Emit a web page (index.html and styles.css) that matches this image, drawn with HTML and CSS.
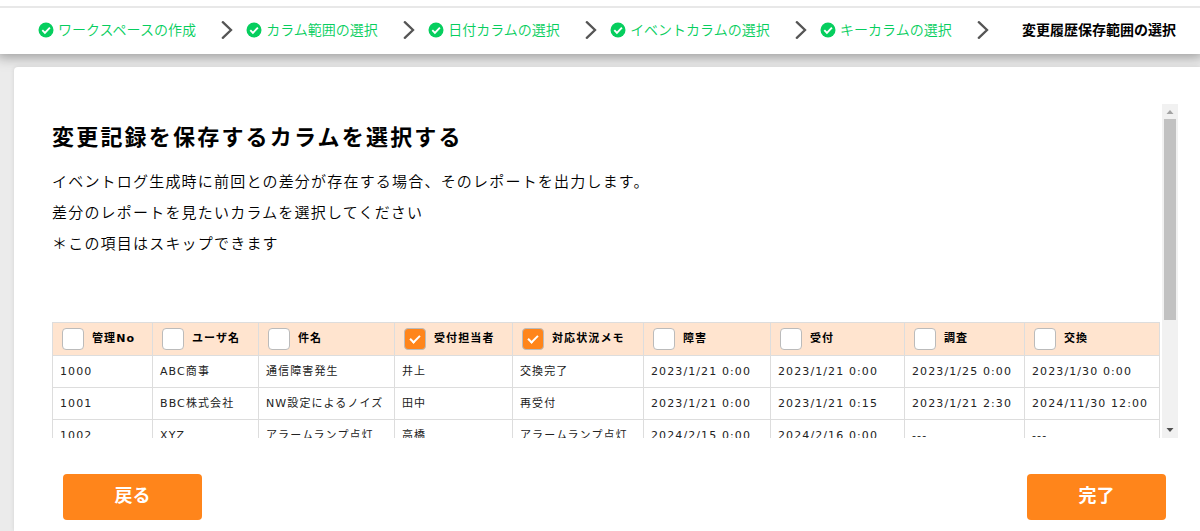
FILE: index.html
```
<!DOCTYPE html>
<html lang="ja">

<head>
    <meta charset="UTF-8">
    <meta name="viewport" content="width=device-width, initial-scale=1.0">
    <title>変更履歴保存範囲の選択</title>
    <link rel="stylesheet" href="styles.css">
</head>

<body>
    <!-- Shared icons -->
    <svg class="icon-defs" aria-hidden="true">
        <symbol id="icon-check" viewBox="0 0 16 16">
            <circle cx="8" cy="8" r="7.5" fill="#06ce5e" />
            <path d="M4.3 8.2l2.6 2.6 5-5.2" fill="none" stroke="#fff" stroke-width="1.9" />
        </symbol>
        <symbol id="icon-chevron" viewBox="0 0 12 18">
            <path d="M1.8 1.2L10 9l-8.2 7.8" fill="none" stroke="#555" stroke-width="2.3" stroke-linecap="round" />
        </symbol>
    </svg>

    <header>
        <ol class="steps">
            <li class="done">
                <svg class="check"><use href="#icon-check" /></svg>
                <span>ワークスペースの作成</span>
                <svg class="chevron"><use href="#icon-chevron" /></svg>
            </li>
            <li class="done">
                <svg class="check"><use href="#icon-check" /></svg>
                <span>カラム範囲の選択</span>
                <svg class="chevron"><use href="#icon-chevron" /></svg>
            </li>
            <li class="done">
                <svg class="check"><use href="#icon-check" /></svg>
                <span>日付カラムの選択</span>
                <svg class="chevron"><use href="#icon-chevron" /></svg>
            </li>
            <li class="done">
                <svg class="check"><use href="#icon-check" /></svg>
                <span>イベントカラムの選択</span>
                <svg class="chevron"><use href="#icon-chevron" /></svg>
            </li>
            <li class="done">
                <svg class="check"><use href="#icon-check" /></svg>
                <span>キーカラムの選択</span>
                <svg class="chevron"><use href="#icon-chevron" /></svg>
            </li>
            <li class="current" aria-current="step">変更履歴保存範囲の選択</li>
        </ol>
    </header>

    <main class="panel">
        <div class="scroll-box">
            <div class="scroll-area">
                <h1>変更記録を保存するカラムを選択する</h1>
                <div class="description">
                    <p>イベントログ生成時に前回との差分が存在する場合、そのレポートを出力します。</p>
                    <p>差分のレポートを見たいカラムを選択してください</p>
                    <p>＊この項目はスキップできます</p>
                </div>

                <table>
                    <colgroup>
                        <col class="col-no">
                        <col class="col-user">
                        <col class="col-subject">
                        <col class="col-staff">
                        <col class="col-memo">
                        <col class="col-failure">
                        <col class="col-received">
                        <col class="col-survey">
                        <col class="col-exchange">
                    </colgroup>
                    <thead>
                        <tr>
                            <th><label><input type="checkbox">管理No</label></th>
                            <th><label><input type="checkbox">ユーザ名</label></th>
                            <th><label><input type="checkbox">件名</label></th>
                            <th><label><input type="checkbox" checked>受付担当者</label></th>
                            <th><label><input type="checkbox" checked>対応状況メモ</label></th>
                            <th><label><input type="checkbox">障害</label></th>
                            <th><label><input type="checkbox">受付</label></th>
                            <th><label><input type="checkbox">調査</label></th>
                            <th><label><input type="checkbox">交換</label></th>
                        </tr>
                    </thead>
                    <tbody>
                        <tr>
                            <td>1000</td>
                            <td>ABC商事</td>
                            <td>通信障害発生</td>
                            <td>井上</td>
                            <td>交換完了</td>
                            <td>2023/1/21 0:00</td>
                            <td>2023/1/21 0:00</td>
                            <td>2023/1/25 0:00</td>
                            <td>2023/1/30 0:00</td>
                        </tr>
                        <tr>
                            <td>1001</td>
                            <td>BBC株式会社</td>
                            <td>NW設定によるノイズ</td>
                            <td>田中</td>
                            <td>再受付</td>
                            <td>2023/1/21 0:00</td>
                            <td>2023/1/21 0:15</td>
                            <td>2023/1/21 2:30</td>
                            <td>2024/11/30 12:00</td>
                        </tr>
                        <tr>
                            <td>1002</td>
                            <td>XYZ</td>
                            <td>アラームランプ点灯</td>
                            <td>高橋</td>
                            <td>アラームランプ点灯</td>
                            <td>2024/2/15 0:00</td>
                            <td>2024/2/16 0:00</td>
                            <td>---</td>
                            <td>---</td>
                        </tr>
                    </tbody>
                </table>
            </div>

            <div class="scrollbar" aria-hidden="true">
                <svg class="arrow" viewBox="0 0 16 15"><path d="M4.5 10L8 6l3.5 4z" fill="#a3a3a3" /></svg>
                <div class="track">
                    <div class="thumb"></div>
                </div>
                <svg class="arrow" viewBox="0 0 16 15"><path d="M4.5 5L8 9l3.5-4z" fill="#505050" /></svg>
            </div>
        </div>

        <div class="actions">
            <button type="button">戻る</button>
            <button type="button">完了</button>
        </div>
    </main>

    <script>
        // Keep the scrollbar thumb in step with the content
        const area = document.querySelector(".scroll-area");
        const track = document.querySelector(".track");
        const thumb = document.querySelector(".thumb");

        function updateThumb() {
            const scale = track.clientHeight / area.scrollHeight;
            thumb.style.height = Math.round(area.clientHeight * scale) + "px";
            thumb.style.marginTop = Math.round(area.scrollTop * scale) + "px";
        }

        area.addEventListener("scroll", updateThumb);
        window.addEventListener("resize", updateThumb);
        updateThumb();
    </script>
</body>

</html>
```
FILE: styles.css
```
* {
    box-sizing: border-box;
}

body {
    display: flex;
    flex-direction: column;
    height: 100vh;
    margin: 0;
    background-color: #ebebeb;
    color: #000;
    font-family: "Noto Sans CJK JP", sans-serif;
    font-weight: 350;
}

.icon-defs {
    display: none;
}

header {
    margin-top: 6px;
    border-top: 2px solid #e8e8e8;
    background-color: #fff;
    box-shadow: 0 -6px 0 #fff, 0 0 12px 3px rgba(0, 0, 0, 0.35);
}

.steps {
    display: flex;
    justify-content: space-between;
    margin: 0;
    padding: 12px 24px 14px 38px;
    list-style: none;
    font-size: 14px;
    line-height: 18px;
    white-space: nowrap;
}

.steps li {
    display: flex;
    align-items: center;
}

.steps span {
    padding-bottom: 2px;
}

.done {
    color: #06ce5e;
}

.steps .current {
    padding: 0 0 2px 20px;
    font-weight: bold;
}

.check {
    width: 16px;
    height: 16px;
    margin-right: 4px;
}

.chevron {
    width: 12px;
    height: 18px;
    margin-left: 25px;
}

.panel {
    display: flex;
    flex: 1;
    flex-direction: column;
    min-height: 0;
    margin: 13px 0 0 14px;
    padding: 37px 22px 11px 38px;
    border-radius: 4px 0 0 0;
    background-color: #fff;
    box-shadow: 0 0 4px rgba(0, 0, 0, 0.1);
}

.scroll-box {
    display: flex;
    flex: 1;
    gap: 2px;
    min-height: 0;
}

.scroll-area {
    flex: 1;
    min-width: 0;
    padding-right: 1px;
    overflow-y: auto;
    scrollbar-width: none;
}

.scrollbar {
    display: flex;
    flex-direction: column;
    width: 16px;
    background-color: #f1f1f1;
}

.arrow {
    width: 16px;
    height: 15px;
}

.track {
    flex: 1;
    padding: 0 2px;
}

.thumb {
    background-color: #c1c1c1;
}

h1 {
    margin: 15px 0 14px;
    font-size: 22px;
    line-height: 32px;
    letter-spacing: 0.1em;
}

.description {
    margin-bottom: 64px;
    font-size: 15px;
    letter-spacing: 0.08em;
}

.description p {
    margin: 0;
    line-height: 31px;
}

table {
    width: 100%;
    margin-bottom: 156px;
    border-collapse: collapse;
    table-layout: fixed;
    font-family: "DejaVu Sans", "Noto Sans CJK JP", sans-serif;
    font-size: 11px;
    font-weight: 400;
    letter-spacing: 0.1em;
    line-height: 16px;
    white-space: nowrap;
}

th,
td {
    padding: 8px 7px 7px;
    border: 1px solid #ddd;
    text-align: left;
}

td {
    color: #222;
}

th {
    padding: 5px 9px;
    background-color: #ffe4cf;
}

.col-no { width: 100px; }
.col-user { width: 106px; }
.col-subject { width: 136px; }
.col-staff { width: 118px; }
.col-memo { width: 131px; }
.col-failure { width: 127px; }
.col-received { width: 134px; }
.col-survey { width: 120px; }
.col-exchange { width: 135px; }

th label {
    display: flex;
    align-items: center;
}

input[type="checkbox"] {
    width: 22px;
    height: 22px;
    margin: 0 8px 0 0;
    border: 1px solid #bbb;
    border-radius: 4px;
    background-color: #fff;
    appearance: none;
}

input[type="checkbox"]:checked {
    background-color: #ff851b;
}

/* White tick */
input[type="checkbox"]:checked::before {
    content: "";
    display: block;
    width: 8px;
    height: 4px;
    margin: 6px 0 0 5px;
    border-bottom: 2px solid #fff;
    border-left: 2px solid #fff;
    transform: rotate(-45deg);
}

.actions {
    display: flex;
    justify-content: space-between;
    margin-top: 36px;
    padding: 0 12px 0 11px;
}

.actions button {
    width: 139px;
    height: 46px;
    padding: 0 0 6px;
    border: none;
    border-radius: 4px;
    background-color: #ff851b;
    color: #fff;
    font-family: inherit;
    font-size: 18px;
    font-weight: bold;
    cursor: pointer;
}
```
